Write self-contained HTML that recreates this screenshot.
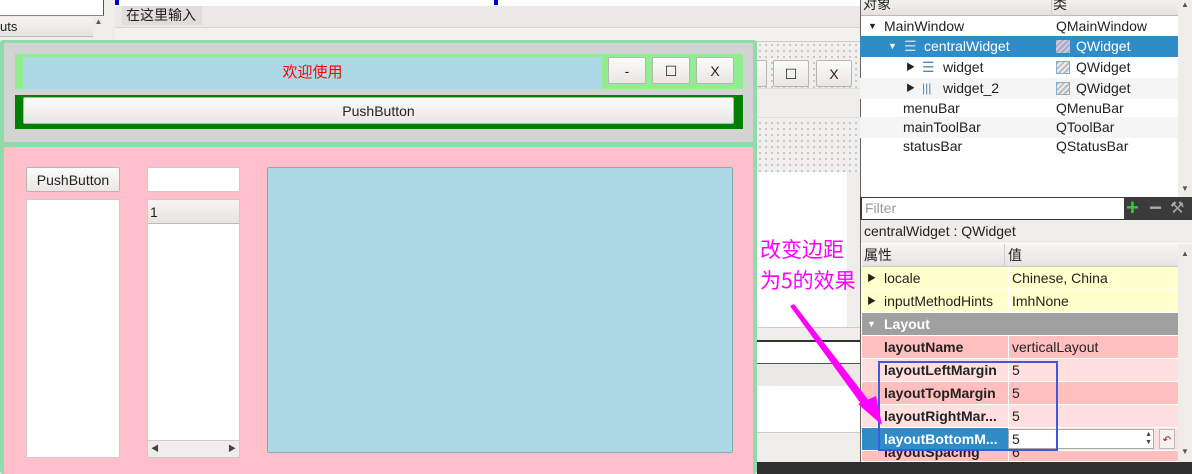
<!DOCTYPE html>
<html><head><meta charset="utf-8"><style>
*{box-sizing:border-box;margin:0;padding:0}
body{width:1192px;height:474px;position:relative;overflow:hidden;background:#efedea;font-family:"Liberation Sans","Noto Sans CJK SC",sans-serif;font-size:14px;color:#222}
.a{position:absolute}
.btn{position:absolute;background:linear-gradient(#fbfbfa,#e9e7e4);border:1px solid #b9b6b0;border-radius:2px;text-align:center;color:#222}
.row{position:absolute;left:860px;width:318px;height:21px;line-height:20px}
.pr{position:absolute;left:862px;width:316px;height:23px;line-height:22px;border-bottom:1px solid #fff}
.pr .k{position:absolute;left:22px;font-weight:bold}
.pr .v{position:absolute;left:146px;top:0;bottom:0;border-left:1px solid #fff;padding-left:3px;width:170px}
.dots{background-image:radial-gradient(#bbb 0.8px,transparent 1px);background-size:6px 6px}
</style></head><body>
<div class="a" style="left:0;top:0;width:104px;height:16px;background:#fff;border-right:1px solid #555;border-bottom:1px solid #888"></div>
<div class="a" style="left:0;top:17px;width:93px;height:20px;background:linear-gradient(#f6f5f3,#e5e3df);border-bottom:1px solid #bbb;line-height:20px;font-size:13px;padding-left:0">uts</div>
<div class="a" style="left:93px;top:17px;width:11px;height:30px;background:#efedea;font-size:8px;color:#555;text-align:center">▲</div>
<div class="a" style="left:115px;top:0;width:745px;height:6px;background:#fff"></div>
<div class="a" style="left:115px;top:0;width:4px;height:5px;background:#00c"></div>
<div class="a" style="left:494px;top:0;width:4px;height:5px;background:#00c"></div>
<div class="a" style="left:115px;top:6px;width:745px;height:22px;background:#ebe9e6;border-bottom:1px solid #d8d6d2"></div>
<div class="a" style="left:122px;top:6px;width:80px;height:19px;background:#e0deda;line-height:19px;padding-left:4px">在这里输入</div>
<div class="a" style="left:115px;top:28px;width:745px;height:14px;background:#f2f1ef;border-bottom:1px solid #ccc"></div>
<div class="a dots" style="left:757px;top:42px;width:103px;height:130px;background-color:#f0efed"></div>
<div class="btn" style="left:742px;top:60px;width:25px;height:27px;line-height:26px">&nbsp;</div>
<div class="btn" style="left:773px;top:60px;width:36px;height:27px;line-height:26px">☐</div>
<div class="btn" style="left:816px;top:60px;width:36px;height:27px;line-height:26px">X</div>
<div class="a" style="left:757px;top:88px;width:103px;height:30px;background:#efedea;border-top:1px solid #ddd;border-bottom:1px solid #ddd"></div>
<div class="a" style="left:757px;top:172px;width:103px;height:155px;background:#fff"></div>
<div class="a" style="left:847px;top:172px;width:13px;height:155px;background:#efedea"></div>
<div class="a" style="left:757px;top:327px;width:103px;height:13px;background:#efedea;border-top:1px solid #ccc"></div>
<div class="a" style="left:757px;top:340px;width:103px;height:24px;background:#fff;border-top:2px solid #333;border-bottom:1px solid #555"></div>
<div class="a" style="left:757px;top:364px;width:103px;height:22px;background:#ebe9e6"></div>
<div class="a" style="left:757px;top:386px;width:103px;height:46px;background:#fff"></div>
<div class="a" style="left:757px;top:432px;width:103px;height:30px;background:#efedea;border-top:1px solid #ccc"></div>
<div class="a" style="left:757px;top:462px;width:435px;height:12px;background:#303030"></div>

<div class="a" style="left:0;top:40px;width:757px;height:434px;background:#8fdcaa;border-radius:3px"></div>
<div class="a" style="left:4px;top:43px;width:749px;height:99px;background:#d3d3d3"></div>
<div class="a" style="left:15px;top:54px;width:728px;height:35px;background:#90ee90"></div>
<div class="a" style="left:23px;top:57px;width:579px;height:32px;background:#add8e6;color:#f00;text-align:center;line-height:32px;font-size:15px">欢迎使用</div>
<div class="btn" style="left:608px;top:57px;width:38px;height:27px;line-height:26px">-</div>
<div class="btn" style="left:652px;top:57px;width:38px;height:27px;line-height:26px">☐</div>
<div class="btn" style="left:696px;top:57px;width:38px;height:27px;line-height:26px">X</div>
<div class="a" style="left:15px;top:95px;width:728px;height:34px;background:#008000"></div>
<div class="btn" style="left:23px;top:97px;width:711px;height:27px;line-height:26px">PushButton</div>
<div class="a" style="left:4px;top:147px;width:749px;height:327px;background:#ffc0cb"></div>
<div class="btn" style="left:26px;top:167px;width:94px;height:25px;line-height:24px">PushButton</div>
<div class="a" style="left:26px;top:199px;width:94px;height:259px;background:#fff;border:1px solid #ccc"></div>
<div class="a" style="left:147px;top:167px;width:93px;height:25px;background:#fff;border:1px solid #ccc;border-radius:2px"></div>
<div class="a" style="left:147px;top:199px;width:93px;height:259px;background:#fff;border:1px solid #ccc"></div>
<div class="a" style="left:148px;top:200px;width:91px;height:24px;background:linear-gradient(#f6f5f3,#e6e4e0);border-bottom:1px solid #bbb;line-height:24px;padding-left:2px">1</div>
<div class="a" style="left:148px;top:440px;width:91px;height:17px;background:#efedea;border-top:1px solid #ccc;font-size:8px;line-height:16px;color:#444"><span style="position:absolute;left:3px">◀</span><span style="position:absolute;right:3px">▶</span></div>
<div class="a" style="left:267px;top:167px;width:466px;height:286px;background:#add8e6;border:1px solid #8aa;border-radius:2px"></div>

<div class="a" style="left:860px;top:0;width:332px;height:197px;background:#fff;border-left:1px solid #666"></div>
<div class="a" style="left:861px;top:0;width:317px;height:16px;background:linear-gradient(#f3f2f0,#e4e2de);border-bottom:1px solid #bbb;line-height:12px"><span class="a" style="left:2px;top:-2px">对象</span><span class="a" style="left:192px;top:-2px">类</span><span class="a" style="left:190px;top:0;height:16px;border-left:1px solid #ccc"></span></div>
<div class="a" style="left:1178px;top:0;width:14px;height:197px;background:#efedea;font-size:8px;color:#555;text-align:center">▲<div style="position:absolute;bottom:4px;width:14px">▼</div></div>
<div class="row" style="top:16px"><span class="a" style="left:8px;font-size:9px">▼</span><span class="a" style="left:24px">MainWindow</span><span class="a" style="left:196px">QMainWindow</span></div>
<div class="row" style="top:36px;background:#308cc6;color:#fff"><span class="a" style="left:28px;font-size:9px">▼</span><span class="a" style="left:44px;color:#cde">☰</span><span class="a" style="left:64px">centralWidget</span><span class="a" style="left:196px;top:4px;width:14px;height:13px;background:repeating-linear-gradient(135deg,#aac 0 2px,#ccd 2px 4px)"></span><span class="a" style="left:216px">QWidget</span></div>
<div class="row" style="top:57px"><span class="a" style="left:46px;font-size:9px">▶</span><span class="a" style="left:62px;color:#58a">☰</span><span class="a" style="left:83px">widget</span><span class="a" style="left:196px;top:4px;width:14px;height:13px;border:1px solid #8ac;background:repeating-linear-gradient(135deg,#bbb 0 2px,#eee 2px 4px)"></span><span class="a" style="left:216px">QWidget</span></div>
<div class="row" style="top:78px;background:#f5f5f5"><span class="a" style="left:46px;font-size:9px">▶</span><span class="a" style="left:62px;color:#58a;font-size:12px">|||</span><span class="a" style="left:83px">widget_2</span><span class="a" style="left:196px;top:4px;width:14px;height:13px;border:1px solid #8ac;background:repeating-linear-gradient(135deg,#bbb 0 2px,#eee 2px 4px)"></span><span class="a" style="left:216px">QWidget</span></div>
<div class="row" style="top:98px"><span class="a" style="left:43px">menuBar</span><span class="a" style="left:196px">QMenuBar</span></div>
<div class="row" style="top:117px;background:#f5f5f5"><span class="a" style="left:43px">mainToolBar</span><span class="a" style="left:196px">QToolBar</span></div>
<div class="row" style="top:136px"><span class="a" style="left:43px">statusBar</span><span class="a" style="left:196px">QStatusBar</span></div>
<div class="a" style="left:860px;top:197px;width:332px;height:23px;background:#3b3b3b"></div>
<div class="a" style="left:862px;top:198px;width:262px;height:21px;background:#fff;color:#999;line-height:21px;padding-left:3px">Filter</div>
<div class="a" style="left:1126px;top:195px;color:#3c3;font-size:22px;font-weight:bold">+</div>
<div class="a" style="left:1149px;top:195px;color:#aaa;font-size:22px;font-weight:bold">−</div>
<div class="a" style="left:1170px;top:198px;color:#aaa;font-size:16px">⚒</div>
<div class="a" style="left:860px;top:220px;width:332px;height:23px;background:#efedea;line-height:22px;padding-left:3px;border-left:1px solid #666">centralWidget : QWidget</div>
<div class="a" style="left:860px;top:243px;width:332px;height:219px;background:#fff;border-left:1px solid #666"></div>
<div class="a" style="left:862px;top:244px;width:316px;height:23px;background:linear-gradient(#f6f5f3,#e6e4e0);line-height:23px;border-bottom:1px solid #ccc"><span class="a" style="left:2px">属性</span><span class="a" style="left:142px;top:0;height:23px;border-left:1px solid #ccc;padding-left:3px">值</span></div>
<div class="a" style="left:1178px;top:244px;width:14px;height:218px;background:#efedea;font-size:8px;color:#555;text-align:center;padding-top:5px">▲<div style="position:absolute;bottom:6px;width:14px">▼</div></div>
<div class="pr" style="top:267px;background:#ffffcc"><span class="a" style="left:5px;font-size:9px">▶</span><span class="a" style="left:22px">locale</span><span class="v">Chinese, China</span></div>
<div class="pr" style="top:290px;background:#ffffcc"><span class="a" style="left:5px;font-size:9px">▶</span><span class="a" style="left:22px">inputMethodHints</span><span class="v">ImhNone</span></div>
<div class="pr" style="top:313px;background:#a0a0a0;color:#fff"><span class="a" style="left:5px;font-size:9px">▼</span><span class="a" style="left:22px;font-weight:bold">Layout</span></div>
<div class="pr" style="top:336px;background:#ffbfbf"><span class="k">layoutName</span><span class="v">verticalLayout</span></div>
<div class="pr" style="top:359px;background:#ffdfdf"><span class="k">layoutLeftMargin</span><span class="v">5</span></div>
<div class="pr" style="top:382px;background:#ffbfbf"><span class="k">layoutTopMargin</span><span class="v">5</span></div>
<div class="pr" style="top:405px;background:#ffdfdf"><span class="k">layoutRightMar...</span><span class="v">5</span></div>
<div class="pr" style="top:428px;background:#ffdfdf"><span class="a" style="left:0;top:0;width:146px;height:22px;background:#308cc6"></span><span class="k" style="color:#fff">layoutBottomM...</span><span class="a" style="left:146px;top:1px;width:146px;height:20px;background:#fff;border:1px solid #aaa;padding-left:3px;line-height:18px">5<span class="a" style="right:1px;top:1px;font-size:7px;line-height:8px;color:#444">▲<br>▼</span></span><span class="a" style="left:297px;top:1px;width:16px;height:20px;background:#f3f2f0;border:1px solid #bbb;color:#b00;font-size:10px;text-align:center">↶</span></div>
<div class="pr" style="top:451px;height:11px;overflow:hidden;background:#ffbfbf"><span class="k" style="top:-10px">layoutSpacing</span><span class="v" style="top:-10px">6</span></div>

<div class="a" style="left:878px;top:361px;width:180px;height:90px;border:2px solid #3d5adb"></div>
<div class="a" style="left:760px;top:234px;color:#f0f;font-size:21px;line-height:31px;font-family:'Noto Sans CJK SC',sans-serif;white-space:nowrap">改变边距<br>为5的效果</div>
<svg class="a" style="left:0;top:0" width="1192" height="474"><path d="M790 306 L794 304 L870 402 L864 408 Z" fill="#f0f"/><path d="M858 404 L882 425 L876 396 Z" fill="#f0f"/></svg>
</body></html>
